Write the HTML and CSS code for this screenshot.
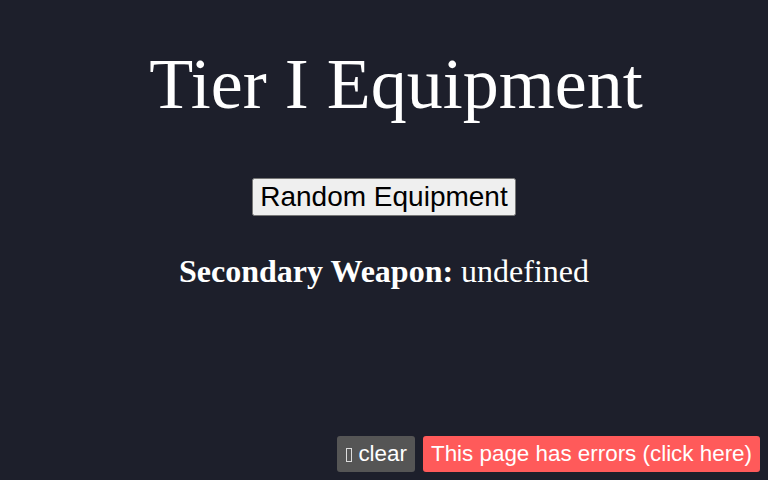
FILE: index.html
```html
<!DOCTYPE html>
<html>
<head>
<meta charset="utf-8">
<link rel="stylesheet" href="styles.css">
</head>
<body>
<main class="page">
  <h1 class="title">Tier I Equipment</h1>
  <button class="random">Random Equipment</button>
  <p class="result"><b>Secondary Weapon:</b> undefined</p>
</main>
<div class="errbar">
  <button class="clear"><span class="tofu"></span> clear</button>
  <button class="errors">This page has errors (click here)</button>
</div>
</body>
</html>
```
FILE: styles.css
```css
html, body {
  margin: 0;
  height: 100%;
  background: #1d1f2b;
}
body {
  font-family: "Liberation Serif", "Times New Roman", serif;
  color: #fff;
}
.page {
  display: flex;
  flex-direction: column;
  align-items: center;
  padding-top: 43px;
}
.title {
  margin: 0;
  padding-left: 24px;
  font-size: 72px;
  font-weight: normal;
  line-height: normal;
}
.random {
  margin-top: 52px;
  font-family: "Liberation Sans", Arial, sans-serif;
  font-size: 28px;
}
.result {
  margin: 37px 0 0;
  font-size: 32px;
}
.errbar {
  position: fixed;
  right: 8px;
  bottom: 8px;
  display: flex;
  gap: 8px;
}
.errbar button {
  font-family: "Liberation Sans", Arial, sans-serif;
  font-size: 22.4px;
  line-height: 26px;
  padding: 5px 8px;
  border: none;
  border-radius: 3px;
  color: #fff;
}
.errbar .clear {
  background: #555;
}
.tofu {
  display: inline-block;
  width: 4px;
  height: 12px;
  border: 1px solid #ddd;
  margin-left: 1px;
  vertical-align: -1px;
}
.errors {
  background: #ff5a5a;
}
```
